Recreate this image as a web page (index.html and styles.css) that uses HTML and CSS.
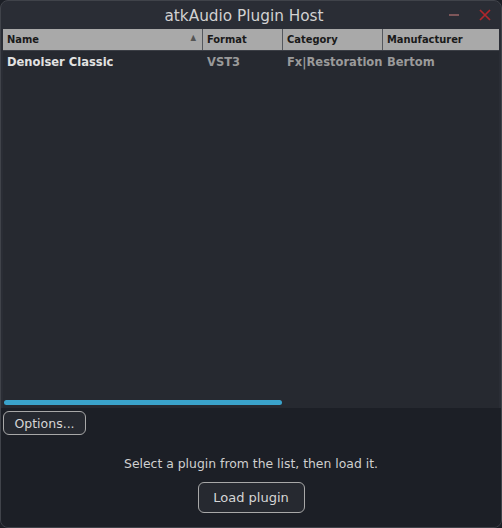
FILE: index.html
```html
<!DOCTYPE html>
<html>
<head>
<meta charset="utf-8">
<link rel="stylesheet" href="styles.css">
</head>
<body>
<div class="window">
  <div class="titlebar">
    <span class="title">atkAudio Plugin Host</span>
    <div class="controls">
      <span class="min"></span>
      <svg class="close" width="12" height="12" viewBox="0 0 12 12"><path d="M1 1L11 11M11 1L1 11" stroke="#b0262b" stroke-width="1.7"/></svg>
    </div>
  </div>
  <div class="list">
    <div class="header">
      <div class="col c1">Name<span class="sort">▲</span></div>
      <div class="col c2">Format</div>
      <div class="col c3">Category</div>
      <div class="col c4">Manufacturer</div>
    </div>
    <div class="row">
      <div class="cell c1 name">Denoiser Classic</div>
      <div class="cell c2">VST3</div>
      <div class="cell c3">Fx|Restoration</div>
      <div class="cell c4">Bertom</div>
    </div>
    <div class="spacer"></div>
    <div class="scroll"><div class="thumb"></div></div>
  </div>
  <div class="bottom">
    <div class="optrow"><button class="btn opt">Options...</button></div>
    <p class="msg">Select a plugin from the list, then load it.</p>
    <button class="btn load">Load plugin</button>
  </div>
</div>
</body>
</html>
```
FILE: styles.css
```css
html, body { margin: 0; padding: 0; background: #1c1f26; }
.window {
  width: 502px; height: 528px; box-sizing: border-box;
  background: #2a2d35; border: 1px solid #40434a; border-radius: 8px;
  display: flex; flex-direction: column; overflow: hidden;
  font-family: "DejaVu Sans", Verdana, sans-serif;
}
.titlebar {
  height: 28px; flex: none; position: relative;
  display: flex; align-items: center; justify-content: center;
  padding-right: 14px; padding-top: 2px; box-sizing: border-box;
}
.title { color: #d2d2d2; font-size: 15.3px; font-family: "DejaVu Sans", sans-serif; }
.controls { position: absolute; right: 10px; top: 8px; display: flex; align-items: center; gap: 20px; }
.min { width: 10px; height: 2px; background: #7d5659; display: block; }
.list {
  margin: 0 2px 0 2px; background: #262930; flex: 1;
  display: flex; flex-direction: column;
}
.header {
  display: flex; height: 21px; background: #a9a9a9;
  border-bottom: 1px solid #3b3e45;
}
.col {
  font-family: "DejaVu Sans Condensed", "DejaVu Sans", sans-serif;
  font-weight: bold; font-size: 11px; color: #1a1a1a;
  display: flex; align-items: center; padding-left: 4px; box-sizing: border-box;
  border-right: 1px solid #55585e; position: relative;
}
.c1 { width: 200px; }
.c2 { width: 80px; }
.c3 { width: 100px; }
.c4 { flex: 1; border-right: none; }
.sort { position: absolute; right: 6px; top: 4px; font-size: 8px; color: #555; }
.row { display: flex; height: 20px; }
.cell {
  font-family: "DejaVu Sans Condensed", "DejaVu Sans", sans-serif;
  font-weight: bold; font-size: 12.8px; color: #9a9a9a;
  display: flex; align-items: center; padding-left: 4px; box-sizing: border-box;
  white-space: nowrap; overflow: hidden;
}
.cell.name { color: #e2e2e2; }
.spacer { flex: 1; }
.scroll { height: 6px; margin: 0 0 2px 1px; }
.thumb { width: 278px; height: 5px; background: #3aa3cb; border-radius: 3px; }
.bottom {
  flex: none; height: 119px; background: #1c1f26;
  display: flex; flex-direction: column; align-items: center;
}
.optrow { align-self: stretch; padding: 3px 0 0 2px; }
.btn {
  font-family: "DejaVu Sans", sans-serif; font-size: 13px; color: #d6d6d6;
  background: #262930; border: 1px solid #a8a8a8; border-radius: 6px;
  padding: 0; cursor: default;
}
.opt { width: 83px; height: 24px; font-size: 12.5px; }
.msg { margin: 21px 0 0 0; color: #d0d0d0; font-size: 12.4px; }
.load { width: 107px; height: 31px; margin-top: 11px; }
```
